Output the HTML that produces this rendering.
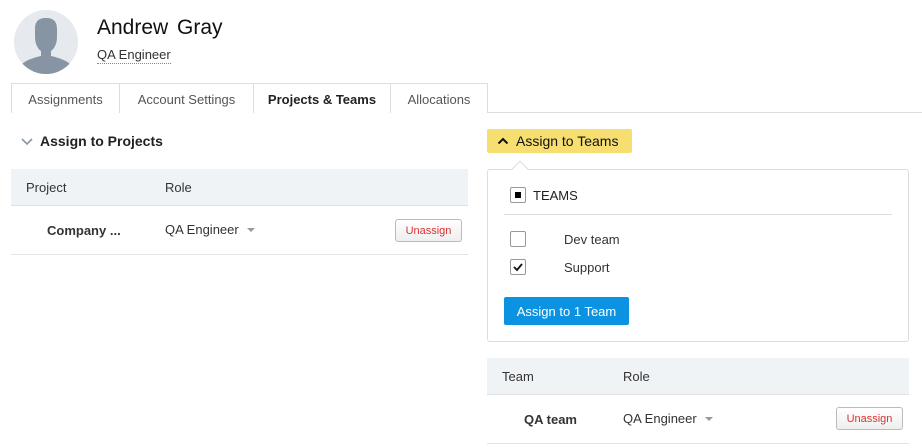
<!DOCTYPE html>
<html><head><meta charset="utf-8"><style>
*{box-sizing:border-box;margin:0;padding:0}
body{width:922px;height:448px;overflow:hidden;background:#fff;font-family:"Liberation Sans",sans-serif;color:#333;position:relative;font-size:13px}
.a{position:absolute}
.tab{position:absolute;top:83px;height:30px;border:1px solid #ddd;border-bottom:none;background:#fff;font-size:13px;color:#555;text-align:center;line-height:31px}
.cb{position:absolute;width:16px;height:16px;border:1px solid #999;border-radius:2px;background:#fff}
.btn{position:absolute;height:23px;border:1px solid #bbb;border-radius:3px;background:linear-gradient(#fff,#eee);color:#d33;font-size:11px;text-align:center;line-height:22px}
</style></head><body>
<svg class="a" style="left:14px;top:10px" width="64" height="64" viewBox="0 0 64 64">
<defs><clipPath id="c"><circle cx="32" cy="32" r="32"/></clipPath></defs>
<circle cx="32" cy="32" r="32" fill="#e6e9ed"/>
<g clip-path="url(#c)" fill="#8794a3">
<path d="M32 8 C24 8 21 12 21 19 L21 27 C21 34 24 39 27 41 L27 46 C18 48 10 51 6 56 L2 64 L62 64 L58 56 C54 51 46 48 37 46 L37 41 C40 39 43 34 43 27 L43 19 C43 12 40 8 32 8 Z"/>
</g></svg>
<div class="a" style="left:97px;top:16px;font-size:21px;color:#111;word-spacing:3px">Andrew Gray</div>
<div class="a" style="left:97px;top:46px;font-size:13px;color:#333;border-bottom:1px dotted #888;line-height:17px">QA Engineer</div>

<div class="a" style="left:11px;top:112px;width:911px;height:1px;background:#ddd"></div>
<div class="tab" style="left:11px;width:109px">Assignments</div>
<div class="tab" style="left:119px;width:135px">Account Settings</div>
<div class="tab" style="left:253px;width:138px;height:30px;color:#222;font-weight:bold">Projects &amp; Teams</div>
<div class="tab" style="left:390px;width:98px">Allocations</div>

<svg class="a" style="left:21px;top:138px" width="12" height="8"><path d="M1 1 L6 6 L11 1" stroke="#8a96a3" stroke-width="1.6" fill="none"/></svg>
<div class="a" style="left:40px;top:133px;font-size:14px;color:#222;font-weight:bold">Assign to Projects</div>
<div class="a" style="left:11px;top:169px;width:457px;height:37px;background:#f0f3f6;border-bottom:1px solid #dde1e5"></div>
<div class="a" style="left:26px;top:180px">Project</div>
<div class="a" style="left:165px;top:180px">Role</div>
<div class="a" style="left:47px;top:223px;font-weight:bold;color:#333">Company ...</div>
<div class="a" style="left:165px;top:222px">QA Engineer</div>
<div class="a" style="left:247px;top:228px;border:4px solid transparent;border-top:4px solid #999"></div>
<div class="btn" style="left:395px;top:219px;width:67px">Unassign</div>
<div class="a" style="left:11px;top:254px;width:457px;height:1px;background:#e2e5e8"></div>

<div class="a" style="left:487px;top:129px;width:145px;height:24px;background:#f6df70;border-radius:2px"></div>
<svg class="a" style="left:497px;top:137px" width="12" height="8"><path d="M1.5 6.5 L6 2 L10.5 6.5" stroke="#111" stroke-width="2" fill="none"/></svg>
<div class="a" style="left:516px;top:133px;font-size:14px;color:#111">Assign to Teams</div>
<div class="a" style="left:487px;top:169px;width:422px;height:173px;border:1px solid #ddd;border-radius:3px"></div>
<div class="a" style="left:514px;top:163px;width:12px;height:12px;background:#fff;border-left:1px solid #ddd;border-top:1px solid #ddd;transform:rotate(45deg)"></div>
<div class="cb" style="left:510px;top:187px"><div class="a" style="left:4px;top:4px;width:6px;height:6px;background:#000"></div></div>
<div class="a" style="left:533px;top:188px;color:#222">TEAMS</div>
<div class="a" style="left:504px;top:214px;width:388px;height:1px;background:#ddd"></div>
<div class="cb" style="left:510px;top:231px"></div>
<div class="a" style="left:564px;top:232px">Dev team</div>
<div class="cb" style="left:510px;top:259px"><svg class="a" style="left:1px;top:1px" width="12" height="12"><path d="M2 6 L5 9 L10 3" stroke="#111" stroke-width="1.8" fill="none"/></svg></div>
<div class="a" style="left:564px;top:260px">Support</div>
<div class="a" style="left:504px;top:297px;width:125px;height:28px;background:#0b93e2;border-radius:2px;color:#fff;text-align:center;line-height:29px">Assign to 1 Team</div>

<div class="a" style="left:487px;top:358px;width:422px;height:37px;background:#f0f3f6;border-bottom:1px solid #dde1e5"></div>
<div class="a" style="left:502px;top:369px">Team</div>
<div class="a" style="left:623px;top:369px">Role</div>
<div class="a" style="left:524px;top:412px;font-weight:bold">QA team</div>
<div class="a" style="left:623px;top:411px">QA Engineer</div>
<div class="a" style="left:705px;top:417px;border:4px solid transparent;border-top:4px solid #999"></div>
<div class="btn" style="left:836px;top:407px;width:67px">Unassign</div>
<div class="a" style="left:487px;top:443px;width:422px;height:1px;background:#e2e5e8"></div>
</body></html>
